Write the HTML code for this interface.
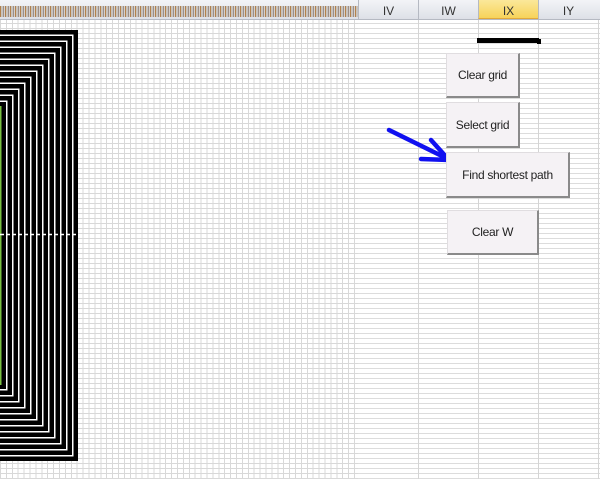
<!DOCTYPE html>
<html><head><meta charset="utf-8"><style>
body{margin:0;width:600px;height:479px;overflow:hidden;background:#fff;font-family:"Liberation Sans",sans-serif;position:relative}
.hdr{position:absolute;top:0;left:0;width:600px;height:19px;background:linear-gradient(#f3f4f7,#dde0e7);border-bottom:1px solid #b5b9c2}
.ticks{position:absolute;top:6px;left:0;width:358px;height:11px;background:repeating-linear-gradient(90deg,#b3814a 0 1px,#c9c3bd 1px 3px,#9a8f8a 3px 4px,#d6d0cc 4px 5px)}
.col{position:absolute;top:0;height:19px;width:59px;border-left:1px solid #b5b9c2;text-align:center;line-height:22px;font-size:12px;color:#333}
.gridL{position:absolute;top:20px;left:0;width:358px;height:459px;background-color:#fff;background-image:repeating-linear-gradient(90deg,#d8d8d8 0 1px,transparent 1px 5.9px),repeating-linear-gradient(0deg,#d8d8d8 0 1px,transparent 1px 5px)}
.gridR{position:absolute;top:20px;left:358px;width:242px;height:459px;background-color:#fff;background-image:repeating-linear-gradient(0deg,#dcdcdc 0 1px,transparent 1px 5px)}
.vl{position:absolute;top:20px;width:1px;height:459px;background:#d4d4d4}
.btn{position:absolute;background:#f5f2f5;border:1px solid #e0dde0;border-right:2px solid #8a8a8a;border-bottom:2px solid #8a8a8a;font-family:"Liberation Sans",sans-serif;font-size:12px;letter-spacing:-0.3px;color:#222;text-align:center;box-sizing:border-box}
</style></head><body>
<div class="hdr"><div class="ticks"></div></div>
<div class="col" style="left:358px">IV</div>
<div class="col" style="left:418px">IW</div>
<div class="col" style="left:478px;background:linear-gradient(#fbe89a,#f7d35a);border-bottom:1px solid #e2a93a;height:18px">IX</div>
<div class="col" style="left:538px">IY</div>
<div class="gridL"></div>
<div class="gridR"></div>
<div class="vl" style="left:418px"></div><div class="vl" style="left:478px"></div><div class="vl" style="left:538px"></div><div class="vl" style="left:598px"></div>
<svg style="position:absolute;left:0;top:0" width="600" height="479">
<g>
<rect x="-10" y="30" width="88" height="431" fill="#000"/><rect x="-10" y="34.5" width="83.5" height="422" fill="#fff"/>
<rect x="-10" y="36" width="82" height="419" fill="#000"/><rect x="-10" y="40.5" width="77.5" height="410" fill="#fff"/>
<rect x="-10" y="42" width="76" height="407" fill="#000"/><rect x="-10" y="46.5" width="71.5" height="398" fill="#fff"/>
<rect x="-10" y="48" width="70" height="395" fill="#000"/><rect x="-10" y="52.5" width="65.5" height="386" fill="#fff"/>
<rect x="-10" y="54" width="64" height="383" fill="#000"/><rect x="-10" y="58.5" width="59.5" height="374" fill="#fff"/>
<rect x="-10" y="60" width="58" height="371" fill="#000"/><rect x="-10" y="64.5" width="53.5" height="362" fill="#fff"/>
<rect x="-10" y="66" width="52" height="359" fill="#000"/><rect x="-10" y="70.5" width="47.5" height="350" fill="#fff"/>
<rect x="-10" y="72" width="46" height="347" fill="#000"/><rect x="-10" y="76.5" width="41.5" height="338" fill="#fff"/>
<rect x="-10" y="78" width="40" height="335" fill="#000"/><rect x="-10" y="82.5" width="35.5" height="326" fill="#fff"/>
<rect x="-10" y="84" width="34" height="323" fill="#000"/><rect x="-10" y="88.5" width="29.5" height="314" fill="#fff"/>
<rect x="-10" y="90" width="28" height="311" fill="#000"/><rect x="-10" y="94.5" width="23.5" height="302" fill="#fff"/>
<rect x="-10" y="96" width="22" height="299" fill="#000"/><rect x="-10" y="100.5" width="17.5" height="290" fill="#fff"/>
<rect x="-10" y="102" width="16" height="287" fill="#000"/><rect x="-10" y="106.5" width="11.5" height="278" fill="#fff"/>
<rect x="-10" y="108" width="10" height="275" fill="#000"/>
</g>
<rect x="0" y="106" width="1.5" height="279" fill="#7ac142"/>
<line x1="0" y1="234.5" x2="79" y2="234.5" stroke="#fff" stroke-width="1.5" stroke-dasharray="4 2"/>
<rect x="477" y="38" width="62" height="5" fill="#000"/>
<rect x="537" y="39" width="4" height="5" fill="#000"/>
<g stroke="#1010f0" stroke-width="4.5" fill="none" stroke-linecap="round" stroke-linejoin="round">
<line x1="389" y1="130" x2="448" y2="159"/>
<polyline points="431,140 449,160 421,159"/>
</g>
</svg>
<div class="btn" style="left:446px;top:53px;width:74px;height:45px;line-height:43px">Clear grid</div>
<div class="btn" style="left:446px;top:102px;width:74px;height:46px;line-height:44px">Select grid</div>
<div class="btn" style="left:446px;top:152px;width:124px;height:46px;line-height:44px">Find shortest path</div>
<div class="btn" style="left:447px;top:210px;width:92px;height:45px;line-height:43px">Clear W</div>
</body></html>
